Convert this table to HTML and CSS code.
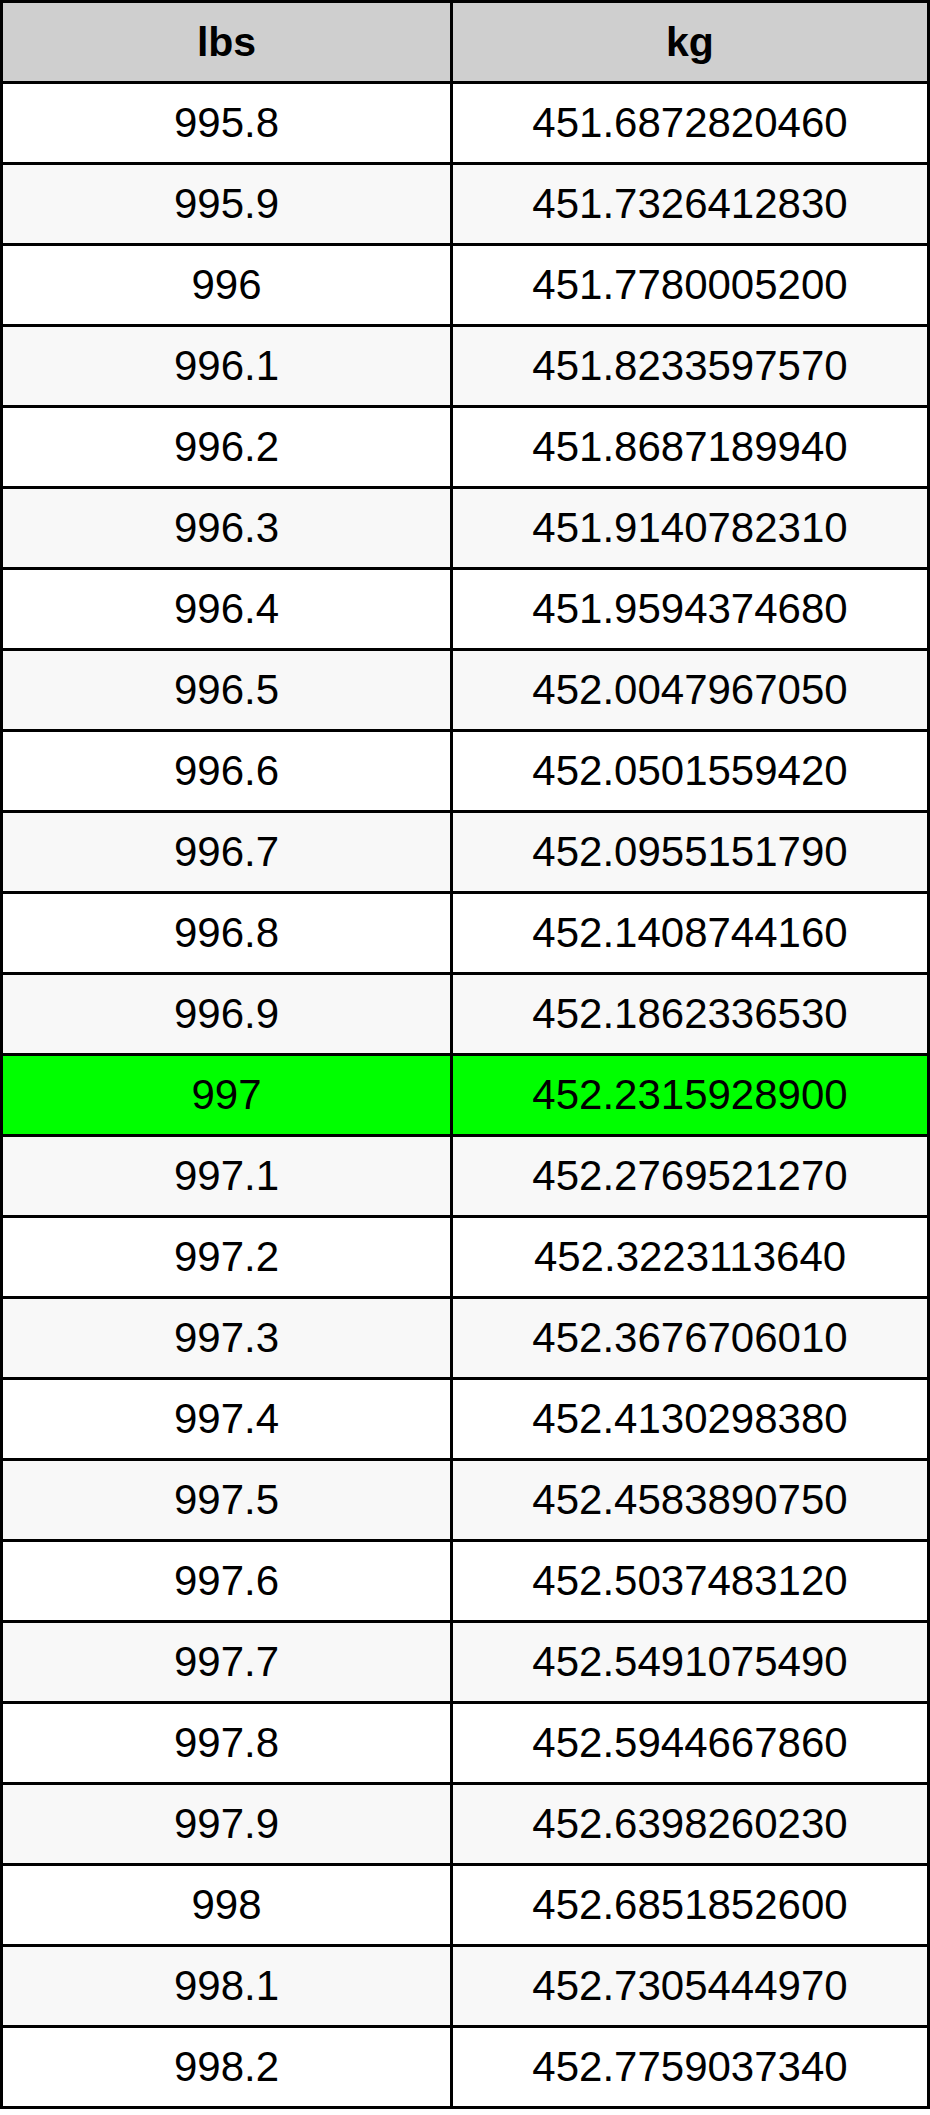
FILE: index.html
```html
<!DOCTYPE html>
<html>
<head>
<meta charset="utf-8">
<title>lbs to kg</title>
<link rel="stylesheet" href="styles.css">
</head>
<body>
<table class="conv">
<colgroup><col class="c1"><col class="c2"></colgroup>
<thead>
<tr><th>lbs</th><th>kg</th></tr>
</thead>
<tbody>
<tr><td>995.8</td><td>451.6872820460</td></tr>
<tr><td>995.9</td><td>451.7326412830</td></tr>
<tr><td>996</td><td>451.7780005200</td></tr>
<tr><td>996.1</td><td>451.8233597570</td></tr>
<tr><td>996.2</td><td>451.8687189940</td></tr>
<tr><td>996.3</td><td>451.9140782310</td></tr>
<tr><td>996.4</td><td>451.9594374680</td></tr>
<tr><td>996.5</td><td>452.0047967050</td></tr>
<tr><td>996.6</td><td>452.0501559420</td></tr>
<tr><td>996.7</td><td>452.0955151790</td></tr>
<tr><td>996.8</td><td>452.1408744160</td></tr>
<tr><td>996.9</td><td>452.1862336530</td></tr>
<tr class="hl"><td>997</td><td>452.2315928900</td></tr>
<tr><td>997.1</td><td>452.2769521270</td></tr>
<tr><td>997.2</td><td>452.3223113640</td></tr>
<tr><td>997.3</td><td>452.3676706010</td></tr>
<tr><td>997.4</td><td>452.4130298380</td></tr>
<tr><td>997.5</td><td>452.4583890750</td></tr>
<tr><td>997.6</td><td>452.5037483120</td></tr>
<tr><td>997.7</td><td>452.5491075490</td></tr>
<tr><td>997.8</td><td>452.5944667860</td></tr>
<tr><td>997.9</td><td>452.6398260230</td></tr>
<tr><td>998</td><td>452.6851852600</td></tr>
<tr><td>998.1</td><td>452.7305444970</td></tr>
<tr><td>998.2</td><td>452.7759037340</td></tr>
</tbody>
</table>
</body>
</html>
```
FILE: styles.css
```css
html, body {
  margin: 0;
  padding: 0;
  background: #ffffff;
}
.conv {
  border-collapse: separate;
  border-spacing: 0;
  table-layout: fixed;
  width: 930px;
  border-top: 3px solid #000;
  border-left: 3px solid #000;
  font-family: "Liberation Sans", Arial, sans-serif;
  color: #000;
}
.c1 { width: 450px; }
.c2 { width: 477px; }
.conv th,
.conv td {
  box-sizing: border-box;
  height: 81px;
  padding: 0;
  border-right: 3px solid #000;
  border-bottom: 3px solid #000;
  text-align: center;
  vertical-align: middle;
  font-size: 42px;
  line-height: 48px;
  white-space: nowrap;
}
.conv th {
  background: #cfcfcf;
  font-weight: bold;
  font-size: 41px;
}
.conv tbody tr:nth-child(odd) td { background: #ffffff; }
.conv tbody tr:nth-child(even) td { background: #f8f8f8; }
.conv tbody tr.hl td { background: #00ff00; }
```
